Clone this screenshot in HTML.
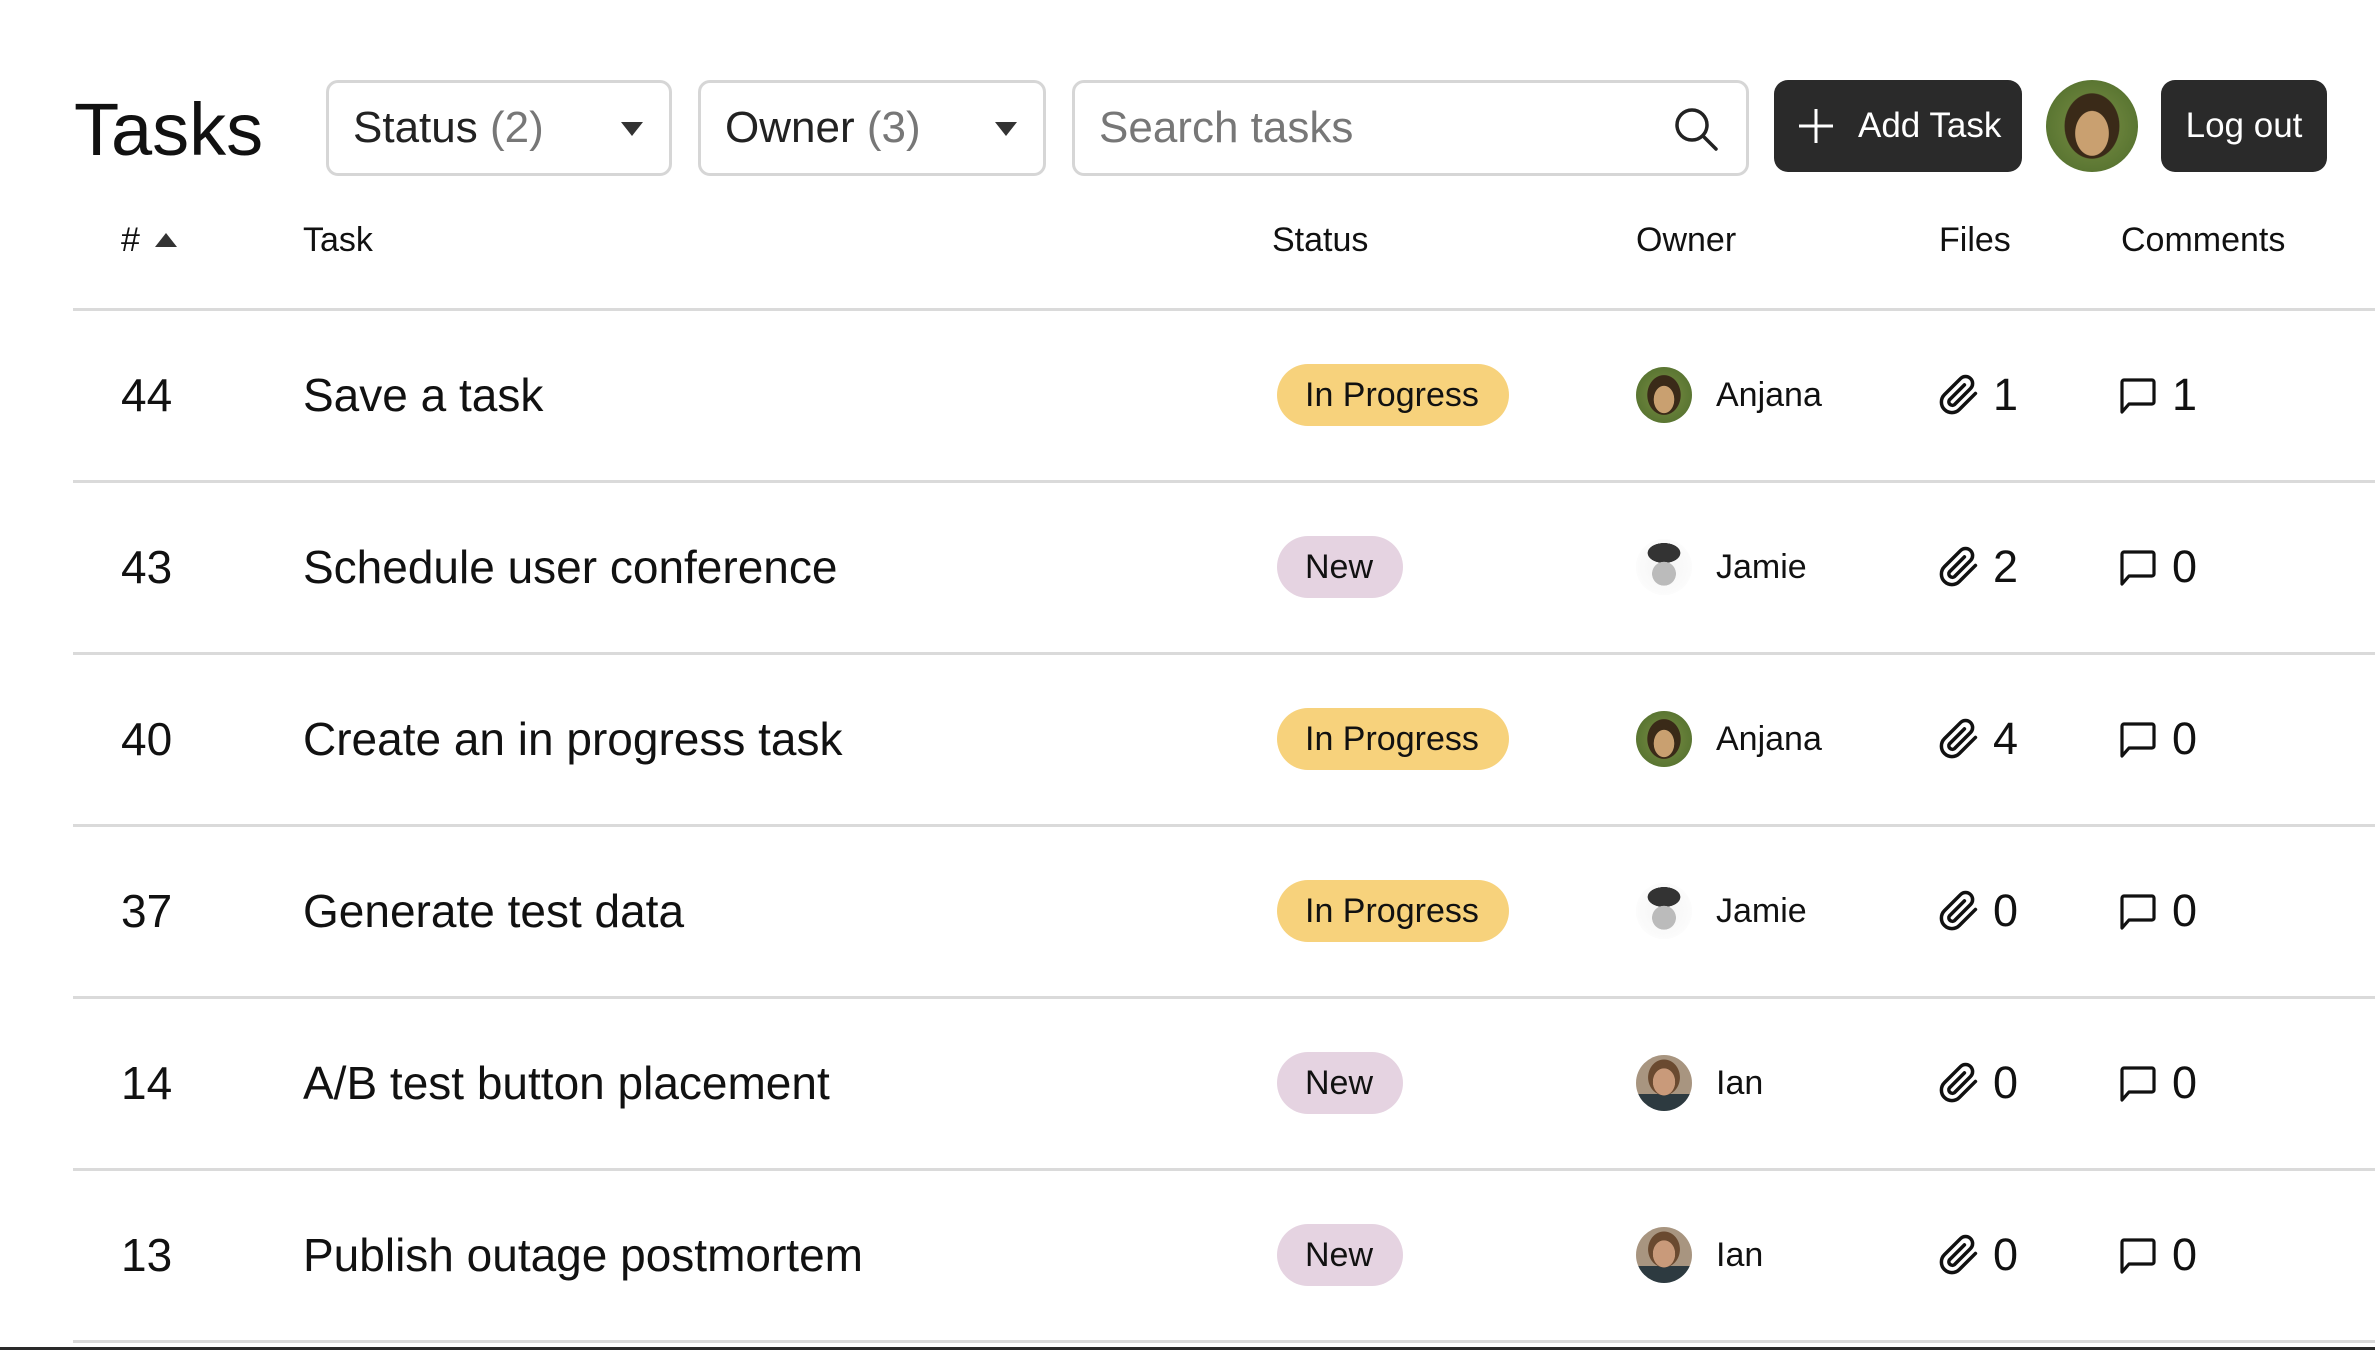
<!DOCTYPE html>
<html><head><meta charset="utf-8">
<style>
*{box-sizing:border-box;margin:0;padding:0}
body{width:2375px;height:1350px;background:#fff;font-family:"Liberation Sans",sans-serif;color:#111;position:relative;overflow:hidden}
.a{position:absolute}
.title{left:74px;top:80px;font-size:74px;line-height:100px;color:#111}
.box{border:3px solid #d6d6d6;border-radius:12px;height:96px;top:80px;background:#fff}
.dd{font-size:44px;line-height:90px;padding-left:24px;color:#222}
.dd span{color:#777}
.tri{position:absolute;right:26px;top:39px;width:0;height:0;border-left:11px solid transparent;border-right:11px solid transparent;border-top:14px solid #333}
.btn{background:#2a2a2a;color:#fff;border-radius:14px;top:80px;height:92px;font-size:35px;line-height:92px}
.hdr{top:218px;font-size:34px;line-height:44px;color:#111}
.line{left:73px;right:0;height:3px;background:#dadada}
.cell{font-size:46px;line-height:60px;color:#111}
.pill{border-radius:32px;height:62px;font-size:34px;line-height:62px;padding:0 30px 0 28px;color:#111}
.ip{background:#f7d27c}
.nw{background:#e5d3e1}
.av{width:56px;height:56px;border-radius:50%}
.name{font-size:34px;line-height:56px}
.num{font-size:45px;line-height:60px}
</style></head><body>
<div class="a title">Tasks</div>

<div class="a box" style="left:326px;width:346px"><div class="dd">Status <span>(2)</span></div><div class="tri"></div></div>
<div class="a box" style="left:698px;width:348px"><div class="dd">Owner <span>(3)</span></div><div class="tri"></div></div>
<div class="a box" style="left:1072px;width:677px"><div class="dd" style="color:#777">Search tasks</div>
<svg class="a" style="right:26px;top:22px" width="48" height="48" viewBox="0 0 48 48"><circle cx="20" cy="20" r="15" fill="none" stroke="#222" stroke-width="3.5"/><line x1="31" y1="31" x2="44" y2="44" stroke="#222" stroke-width="3.5" stroke-linecap="round"/></svg></div>

<div class="a btn" style="left:1774px;width:248px"><svg class="a" style="left:22px;top:26px" width="40" height="40" viewBox="0 0 40 40"><path d="M20 3V37M3 20H37" stroke="#fff" stroke-width="3"/></svg><span class="a" style="left:84px">Add Task</span></div>
<div class="a av" style="left:2046px;top:80px;width:92px;height:92px;background:radial-gradient(ellipse 30% 40% at 50% 58%,#c9a070 0 60%,transparent 62%),radial-gradient(ellipse 42% 50% at 50% 50%,#3a2a18 0 70%,transparent 72%),radial-gradient(circle,#7a8f45,#4d6b2a)"></div>
<div class="a btn" style="left:2161px;width:166px;text-align:center">Log out</div>

<div class="a hdr" style="left:121px"># <span style="display:inline-block;width:0;height:0;border-left:11px solid transparent;border-right:11px solid transparent;border-bottom:14px solid #333;vertical-align:4px;margin-left:6px"></span></div>
<div class="a hdr" style="left:303px">Task</div>
<div class="a hdr" style="left:1272px">Status</div>
<div class="a hdr" style="left:1636px">Owner</div>
<div class="a hdr" style="left:1939px">Files</div>
<div class="a hdr" style="left:2121px">Comments</div>
<div class="a line" style="top:308px"></div>

<div id="rows"></div>
<script>
var rows=[["44","Save a task","ip","In Progress","A","Anjana","1","1"],
["43","Schedule user conference","nw","New","J","Jamie","2","0"],
["40","Create an in progress task","ip","In Progress","A","Anjana","4","0"],
["37","Generate test data","ip","In Progress","J","Jamie","0","0"],
["14","A/B test button placement","nw","New","I","Ian","0","0"],
["13","Publish outage postmortem","nw","New","I","Ian","0","0"]];
var av={A:"radial-gradient(ellipse 30% 40% at 50% 58%,#c9a070 0 60%,transparent 62%),radial-gradient(ellipse 42% 50% at 50% 50%,#3a2a18 0 70%,transparent 72%),radial-gradient(circle,#7a8f45,#4d6b2a)",
J:"radial-gradient(ellipse 30% 30% at 50% 62%,#bbb 0 70%,transparent 72%),radial-gradient(ellipse 36% 22% at 50% 25%,#333 0 80%,transparent 82%),radial-gradient(circle,#f4f4f4,#fff)",
I:"radial-gradient(ellipse 28% 34% at 50% 48%,#c99a7a 0 70%,transparent 72%),radial-gradient(ellipse 40% 45% at 50% 40%,#6a4a30 0 70%,transparent 72%),linear-gradient(#a89580 0 70%,#2d3a40 70%)"};
var h="",y0=309,rh=172;
rows.forEach(function(r,i){var c=y0+i*rh+86;
h+='<div class="a cell" style="left:121px;top:'+(c-30)+'px">'+r[0]+'</div>';
h+='<div class="a cell" style="left:303px;top:'+(c-30)+'px">'+r[1]+'</div>';
h+='<div class="a pill '+r[2]+'" style="left:1277px;top:'+(c-31)+'px">'+r[3]+'</div>';
h+='<div class="a av" style="left:1636px;top:'+(c-28)+'px;background:'+av[r[4]]+'"></div>';
h+='<div class="a name" style="left:1716px;top:'+(c-28)+'px">'+r[5]+'</div>';
h+='<svg class="a" style="left:1938px;top:'+(c-21)+'px" width="42" height="42" viewBox="0 0 24 24"><path d="M21.4 11.1l-9.2 9.2a6 6 0 0 1-8.5-8.5l9.2-9.2a4 4 0 0 1 5.7 5.7l-9.2 9.2a2 2 0 0 1-2.8-2.8l8.5-8.5" fill="none" stroke="#111" stroke-width="2" stroke-linecap="round" stroke-linejoin="round"/></svg>';
h+='<div class="a num" style="left:1993px;top:'+(c-30)+'px">'+r[6]+'</div>';
h+='<svg class="a" style="left:2118px;top:'+(c-19)+'px" width="40" height="40" viewBox="0 0 40 40"><path d="M4 36V6a2 2 0 0 1 2-2h28a2 2 0 0 1 2 2v20a2 2 0 0 1-2 2H11z" fill="none" stroke="#111" stroke-width="3.2" stroke-linejoin="round"/></svg>';
h+='<div class="a num" style="left:2172px;top:'+(c-30)+'px">'+r[7]+'</div>';
h+='<div class="a line" style="top:'+(y0+(i+1)*rh-1)+'px"></div>';
});
document.getElementById("rows").innerHTML=h;
</script>
<div class="a" style="left:0;right:0;top:1347px;height:3px;background:#2a2a2a"></div>
</body></html>
